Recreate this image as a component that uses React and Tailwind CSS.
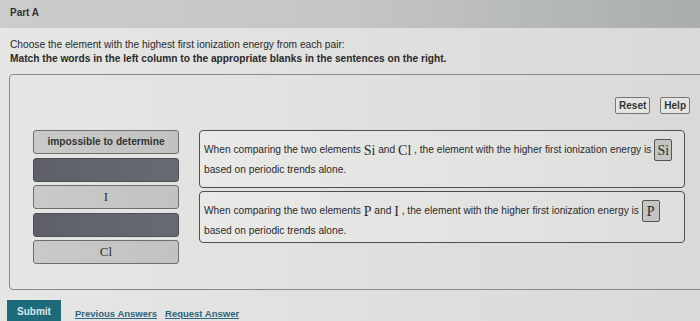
const sans = { fontFamily: '"Liberation Sans", Arial, sans-serif' };

function Chip({ label, dark, serif }) {
  if (dark) {
    return (
      <div className="h-[24px] rounded-[3px] border border-[#4d4f55] bg-gradient-to-r from-[#5d6069] to-[#666a72]" />
    );
  }
  return (
    <div
      className={`flex h-[24px] items-center justify-center rounded-[3px] border border-[#6e6e6e] bg-gradient-to-r from-[#c9c9c7] to-[#c2c3c1] text-[#333] ${
        serif ? "font-['Liberation_Serif'] text-[13px]" : "text-[10.2px] font-bold"
      }`}
    >
      {label}
    </div>
  );
}

function Sentence({ a, b, answer, boxClass }) {
  return (
    <div
      className={`rounded-[4px] border-[1.5px] border-[#4f4f4f] bg-gradient-to-r from-[#e9e9e7] to-[#dedfdd] pl-[4px] pt-[8px] text-[10.2px] text-[#2b2b2b] ${boxClass}`}
    >
      <div className="flex items-center">
        <span>When comparing the two elements&nbsp;</span>
        <span className="font-['Liberation_Serif'] text-[14px]">{a}</span>
        <span>&nbsp;and&nbsp;</span>
        <span className="font-['Liberation_Serif'] text-[14px]">{b}</span>
        <span>&nbsp;, the element with the higher first ionization energy is&nbsp;</span>
        <span className="flex h-[22px] min-w-[18px] items-center justify-center rounded-[2px] border-[1.5px] border-[#555] bg-[#c4c4c2] px-[2px] font-['Liberation_Serif'] text-[14px]">
          {answer}
        </span>
      </div>
      <div className="mt-[1px]">based on periodic trends alone.</div>
    </div>
  );
}

export default function App() {
  return (
    <div
      className="relative h-[321px] w-[700px] overflow-hidden bg-gradient-to-r from-[#e6e6e4] via-[#e0e0de] to-[#d9dad8] text-[#2a2a2a]"
      style={sans}
    >
      <div className="h-[28px] bg-gradient-to-r from-[#cbcdcc] via-[#c3c6c5] to-[#a9aeab] pl-[10px] pt-[5px] text-[10px] font-bold text-[#333]">
        Part A
      </div>

      <div className="pl-[10px] pt-[10px] text-[10.2px]">
        <p className="leading-[14px]">
          Choose the element with the highest first ionization energy from each pair:
        </p>
        <p className="leading-[14px] font-bold">
          Match the words in the left column to the appropriate blanks in the sentences on the right.
        </p>
      </div>

      <div className="ml-[9px] mt-[8px] h-[216px] w-[710px] rounded-[4px] border border-[#8a8a88]">
        <div className="flex justify-end gap-[10px] pr-[28px] pt-[22px]">
          <button className="h-[17px] rounded-[2px] border border-[#777] bg-[#e4e4e2] px-[3px] text-[10px] font-bold text-[#333]">
            Reset
          </button>
          <button className="h-[17px] rounded-[2px] border border-[#777] bg-[#e4e4e2] px-[3px] text-[10px] font-bold text-[#333]">
            Help
          </button>
        </div>

        <div className="flex gap-[20px] pl-[23px] pt-[16px]">
          <div className="flex w-[146px] flex-col gap-[3.5px]">
            <Chip label="impossible to determine" />
            <Chip dark />
            <Chip label="I" serif />
            <Chip dark />
            <Chip label="Cl" serif />
          </div>

          <div className="flex w-[486px] flex-col gap-[3px]">
            <Sentence a="Si" b="Cl" answer="Si" boxClass="h-[58px]" />
            <Sentence a="P" b="I" answer="P" boxClass="h-[52px]" />
          </div>
        </div>
      </div>

      <div className="mt-[10px] flex items-start gap-[14px] pl-[7px]">
        <button className="h-[26px] w-[54px] bg-[#1c6a7a] pb-[4px] text-[10px] font-bold text-[#dbe7ea]">
          Submit
        </button>
        <div className="flex gap-[8px] pt-[7px] text-[9.5px] font-bold text-[#2c6680] underline">
          <span>Previous Answers</span>
          <span>Request Answer</span>
        </div>
      </div>
    </div>
  );
}
